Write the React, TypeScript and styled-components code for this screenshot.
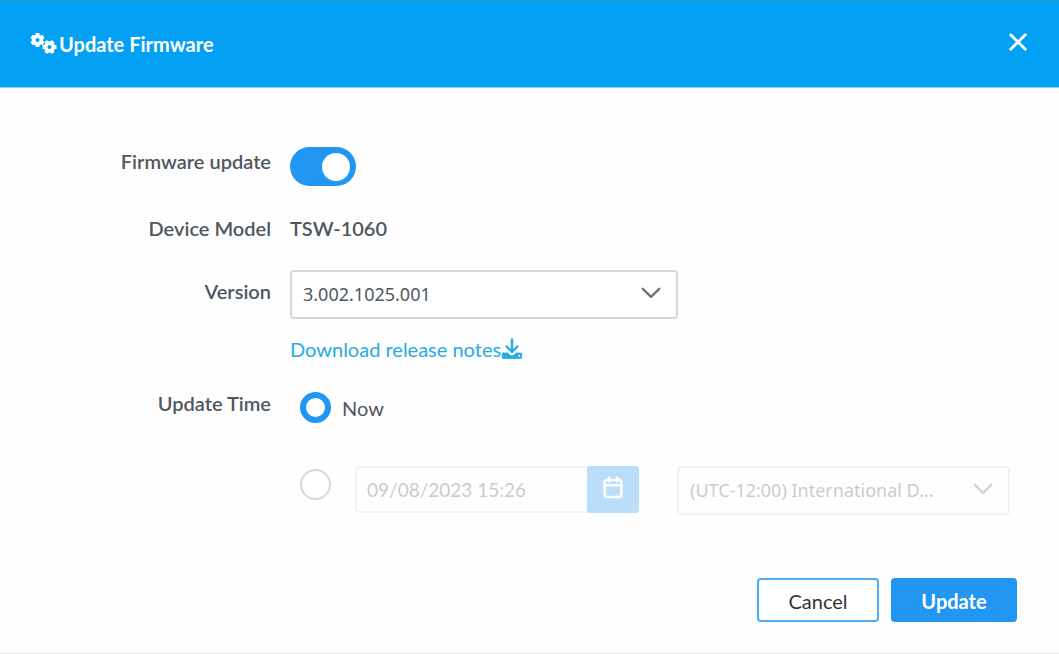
import React, { useState } from 'react';
import styled, { createGlobalStyle } from 'styled-components';

const GlobalStyle = createGlobalStyle`
  *, *::before, *::after { box-sizing: border-box; }
  body {
    margin: 0;
    background: #fefefe;
    color: #4f5760;
    font: 400 20px/24px Lato, "Open Sans", sans-serif;
  }
  button, input, select { font: inherit; color: inherit; margin: 0; }
`;

const Dialog = styled.form`
  display: flex;
  flex-direction: column;
  min-height: 100vh;
  border-bottom: 1px solid #ececec;
`;

const Header = styled.header`
  display: flex;
  align-items: center;
  justify-content: space-between;
  height: 88px;
  padding: 0 30px;
  background: #03a1f4;
  border-top: 1px solid #2f8fc4;
  border-bottom: 1px solid #8fd4fa;
  color: #fff;
`;

const Title = styled.h1`
  display: flex;
  align-items: center;
  gap: 2px;
  margin: 0;
  font-size: 20px;
  line-height: 24px;
  font-weight: 700;
`;

const CloseButton = styled.button`
  display: flex;
  padding: 0 2px 4px;
  border: 0;
  background: none;
  cursor: pointer;
`;

const Body = styled.div`
  display: flex;
  flex-direction: column;
  padding: 59px 49px 0 0;
`;

const Row = styled.div<{ $gap?: number }>`
  display: grid;
  grid-template-columns: 271px minmax(0, 1fr);
  column-gap: 19px;
  align-items: start;
  margin-top: ${(p) => p.$gap ?? 0}px;
`;

const Label = styled.label<{ $top?: number }>`
  padding-top: ${(p) => p.$top ?? 0}px;
  text-align: right;
  font-weight: 600;
`;

const Value = styled.output`
  font-weight: 600;
`;

const Toggle = styled.input`
  appearance: none;
  display: flex;
  align-items: center;
  justify-content: flex-end;
  width: 66px;
  height: 39px;
  padding: 0 6px;
  border-radius: 20px;
  background: #2196f3;
  &::before {
    content: '';
    width: 28px;
    height: 28px;
    border-radius: 50%;
    background: #fff;
  }
  &:not(:checked) {
    justify-content: flex-start;
    background: #ced4da;
  }
`;

const SelectWrap = styled.div<{ $faded?: boolean }>`
  display: grid;
  align-items: center;
  width: 100%;
  max-width: 388px;
  opacity: ${(p) => (p.$faded ? 0.3 : 1)};
  > * { grid-area: 1 / 1; }
  > svg {
    justify-self: end;
    margin-right: 17px;
    margin-bottom: 3px;
    pointer-events: none;
  }
`;

const Select = styled.select`
  appearance: none;
  width: 100%;
  height: 49px;
  padding: 0 44px 2px 11px;
  border: 2px solid #d3d9de;
  border-radius: 4px;
  background: #fff;
  font-family: "Noto Sans", "Open Sans", sans-serif;
  font-size: 18px;
  color: #4f5760;
  opacity: 1;
  text-overflow: ellipsis;
`;

const Link = styled.a`
  display: inline-flex;
  align-items: center;
  justify-self: start;
  grid-column: 2;
  color: #27abe2;
  text-decoration: none;
`;

const Choice = styled.label`
  display: flex;
  align-items: center;
  gap: 11px;
  height: 33px;
  padding-left: 10px;
`;

const Radio = styled.input`
  appearance: none;
  flex: none;
  width: 31px;
  height: 31px;
  border: 2px solid #d3d9de;
  border-radius: 50%;
  background: #fff;
  &:checked { border: 6px solid #2196f3; }
`;

const Schedule = styled.div`
  display: grid;
  grid-column: 2;
  grid-template-columns: 31px minmax(0, 346fr) minmax(0, 333fr);
  align-items: start;
  padding-left: 10px;
`;

const RadioCell = styled.div`
  display: flex;
  padding-top: 3px;
`;

const DateGroup = styled.div`
  display: flex;
  height: 47px;
  margin: 0 38px 0 24px;
  opacity: 0.3;
`;

const DateInput = styled.input`
  flex: 1;
  min-width: 0;
  padding: 0 10px;
  border: 2px solid #d3d9de;
  border-right: 0;
  border-radius: 4px 0 0 4px;
  background: #fff;
  font-size: 19px;
`;

const CalendarButton = styled.button`
  display: flex;
  justify-content: center;
  width: 52px;
  padding: 10px 0 0;
  border: 0;
  border-radius: 3px;
  background: #2196f3;
  color: #fff;
`;

const Footer = styled.footer`
  display: flex;
  justify-content: flex-end;
  gap: 12px;
  padding: 63px 42px 30px 0;
`;

const Button = styled.button<{ $primary?: boolean }>`
  width: ${(p) => (p.$primary ? 126 : 122)}px;
  height: 44px;
  padding: 2px 0 0;
  border: 2px solid ${(p) => (p.$primary ? '#2196f3' : '#4babf5')};
  border-radius: 4px;
  background: ${(p) => (p.$primary ? '#2196f3' : '#fff')};
  color: ${(p) => (p.$primary ? '#fff' : '#333')};
  font-weight: ${(p) => (p.$primary ? 700 : 400)};
  cursor: pointer;
`;

const Gear = ({ x, y, turn }: { x: number; y: number; turn: number }) => (
  <g transform={`translate(${x} ${y}) rotate(${turn})`}>
    <circle r="3.8" fill="none" stroke="#fff" strokeWidth="3.6" />
    {[0, 60, 120, 180, 240, 300].map((a) => (
      <rect key={a} x="-2" y="-7" width="4" height="3" rx="0.6" fill="#fff" transform={`rotate(${a})`} />
    ))}
  </g>
);

const GearsIcon = () => (
  <svg width="27" height="24" viewBox="0 0 27 24" aria-hidden="true">
    <Gear x={7.5} y={8} turn={0} />
    <Gear x={19.5} y={15} turn={30} />
  </svg>
);

const Chevron = () => (
  <svg width="20" height="12" viewBox="0 0 20 12" fill="none" stroke="#6c757d" strokeWidth="2.4" strokeLinecap="round" strokeLinejoin="round" aria-hidden="true">
    <path d="M1.8 1.8 10 9.8l8.2-8" />
  </svg>
);

const DownloadIcon = () => (
  <svg width="22" height="22" viewBox="0 0 22 22" fill="none" stroke="#27abe2" strokeLinecap="round" strokeLinejoin="round" aria-hidden="true">
    <path d="M11 1.5v11M5.5 8.5l5.5 5.3 5.5-5.3" strokeWidth="2.4" />
    <path d="M2.5 15h4.2l2.5 2.2q1.8 1.2 3.6 0l2.5-2.2h4.2q1.2 0 1.2 1.2v3q0 1.3-1.2 1.3h-17q-1.3 0-1.3-1.3v-3q0-1.2 1.3-1.2z" fill="#27abe2" strokeWidth="0.8" />
    <circle cx="18.2" cy="17.8" r="1" fill="#fefefe" stroke="none" />
  </svg>
);

const CalendarIcon = () => (
  <svg width="20" height="23" viewBox="0 0 20 23" fill="none" stroke="currentColor" strokeWidth="2.5" strokeLinecap="round" strokeLinejoin="round" aria-hidden="true">
    <rect x="1.6" y="4" width="16.8" height="17" rx="2.4" />
    <path d="M1.6 9.3h16.8M6 1.4v4.2M14 1.4v4.2" />
  </svg>
);

const CloseIcon = () => (
  <svg width="18" height="18" viewBox="0 0 18 18" fill="none" stroke="#fff" strokeWidth="2.8" strokeLinecap="round" aria-hidden="true">
    <path d="M1.7 1.7l14.6 14.6M16.3 1.7 1.7 16.3" />
  </svg>
);

export default function App() {
  const [enabled, setEnabled] = useState(true);
  return (
    <>
      <GlobalStyle />
      <Dialog onSubmit={(e) => e.preventDefault()}>
        <Header>
          <Title><GearsIcon />Update Firmware</Title>
          <CloseButton type="button" aria-label="Close"><CloseIcon /></CloseButton>
        </Header>
        <Body>
          <Row>
            <Label htmlFor="enabled" $top={2}>Firmware update</Label>
            <Toggle id="enabled" type="checkbox" role="switch" checked={enabled} onChange={(e) => setEnabled(e.target.checked)} />
          </Row>
          <Row $gap={30}>
            <Label htmlFor="model">Device Model</Label>
            <Value id="model">TSW-1060</Value>
          </Row>
          <Row $gap={30}>
            <Label htmlFor="version" $top={9}>Version</Label>
            <SelectWrap>
              <Select id="version"><option>3.002.1025.001</option></Select>
              <Chevron />
            </SelectWrap>
          </Row>
          <Row $gap={18}>
            <Link href="#release-notes">Download release notes<DownloadIcon /></Link>
          </Row>
          <Row $gap={30} role="radiogroup" aria-labelledby="time-label">
            <Label as="span" id="time-label">Update Time</Label>
            <Choice><Radio type="radio" name="time" defaultChecked />Now</Choice>
          </Row>
          <Row $gap={42}>
            <Schedule>
              <RadioCell><Radio type="radio" name="time" aria-label="Scheduled time" /></RadioCell>
              <DateGroup>
                <DateInput type="text" aria-label="Date and time" defaultValue="09/08/2023 15:26" disabled />
                <CalendarButton type="button" aria-label="Choose date" disabled><CalendarIcon /></CalendarButton>
              </DateGroup>
              <SelectWrap $faded>
                <Select aria-label="Time zone" disabled><option>(UTC-12:00) International D...</option></Select>
                <Chevron />
              </SelectWrap>
            </Schedule>
          </Row>
        </Body>
        <Footer>
          <Button type="button">Cancel</Button>
          <Button type="submit" $primary>Update</Button>
        </Footer>
      </Dialog>
    </>
  );
}
